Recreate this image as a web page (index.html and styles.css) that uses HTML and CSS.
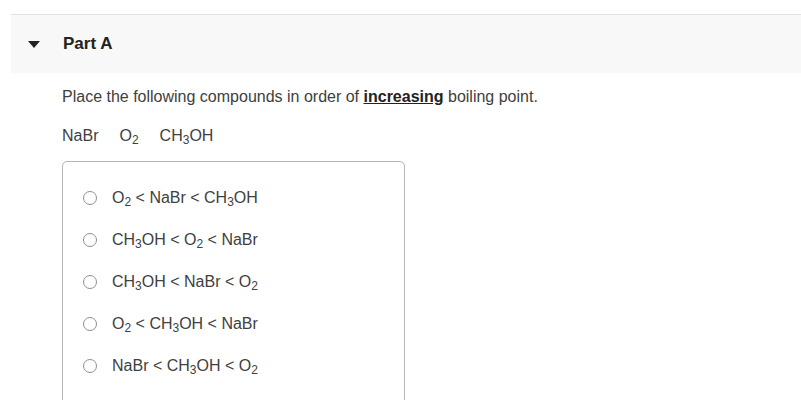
FILE: index.html
```html
<!DOCTYPE html>
<html>
<head>
<meta charset="utf-8">
<link rel="stylesheet" href="styles.css">
</head>
<body>
<div class="part-header">
  <span class="caret"></span>
  <span class="part-title">Part A</span>
</div>
<div class="content">
  <p class="question">Place the following compounds in order of <strong><u>increasing</u></strong> boiling point.</p>
  <p class="compounds"><span>NaBr</span><span>O<sub>2</sub></span><span>CH<sub>3</sub>OH</span></p>
  <div class="choices">
    <label class="choice"><span class="radio"></span><span>O<sub>2</sub> &lt; NaBr &lt; CH<sub>3</sub>OH</span></label>
    <label class="choice"><span class="radio"></span><span>CH<sub>3</sub>OH &lt; O<sub>2</sub> &lt; NaBr</span></label>
    <label class="choice"><span class="radio"></span><span>CH<sub>3</sub>OH &lt; NaBr &lt; O<sub>2</sub></span></label>
    <label class="choice"><span class="radio"></span><span>O<sub>2</sub> &lt; CH<sub>3</sub>OH &lt; NaBr</span></label>
    <label class="choice"><span class="radio"></span><span>NaBr &lt; CH<sub>3</sub>OH &lt; O<sub>2</sub></span></label>
  </div>
</div>
</body>
</html>
```

FILE: styles.css
```css
html, body {
  margin: 0;
  padding: 0;
  background: #fff;
}
body {
  font-family: "Liberation Sans", Arial, sans-serif;
  font-size: 16px;
  color: #404040;
  overflow: hidden;
}
.part-header {
  margin: 14px 0 0 11px;
  height: 59px;
  border-top: 1px solid #e2e2e2;
  background: #f8f8f8;
  display: flex;
  align-items: center;
  box-sizing: border-box;
}
.caret {
  width: 0;
  height: 0;
  margin-left: 17px;
  margin-top: 1px;
  border-left: 6px solid transparent;
  border-right: 6px solid transparent;
  border-top: 7px solid #222;
}
.part-title {
  margin-left: 23px;
  font-weight: bold;
  font-size: 17px;
  color: #222;
}
.content {
  padding-left: 62px;
}
.question {
  margin: 14px 0 0;
  line-height: 20px;
}
.question strong {
  color: #222;
}
.compounds {
  margin: 19px 0 0;
  line-height: 20px;
  display: flex;
  gap: 21px;
}
sub {
  font-size: 12px;
  line-height: 0;
  vertical-align: -3px;
}
.choices {
  margin-top: 15px;
  width: 343px;
  height: 260px;
  box-sizing: border-box;
  border: 1px solid #b5b5b5;
  border-radius: 5px;
  padding: 26px 0 0 20px;
  display: flex;
  flex-direction: column;
  gap: 22px;
}
.choice {
  display: flex;
  align-items: center;
  line-height: 20px;
  gap: 15px;
}
.radio {
  width: 14px;
  height: 14px;
  box-sizing: border-box;
  border: 1px solid #8f8f8f;
  border-radius: 50%;
  background: #fff;
  flex: none;
}
```
